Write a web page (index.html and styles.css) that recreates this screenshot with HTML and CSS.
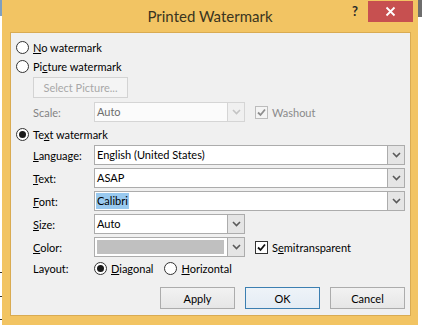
FILE: index.html
```html
<!DOCTYPE html>
<html>
<head>
<meta charset="utf-8">
<link rel="stylesheet" href="styles.css">
</head>
<body>
<div class="desk">
  <div class="edge-blue"></div>
  <div class="edge-gray"></div>
  <div class="tick t1"></div>
  <div class="tick t2"></div>
  <div class="tick t3"></div>
  <div class="window">
    <div class="titlebar">
      <div class="tb-side"></div>
      <div class="title">Printed Watermark</div>
      <div class="tb-side tb-right">
        <div class="help">?</div>
        <div class="close">
          <svg width="11" height="11" viewBox="0 0 11 11"><path d="M1.5 1.5 L9.5 9.5 M9.5 1.5 L1.5 9.5" stroke="#fff" stroke-width="1.8" fill="none"/></svg>
        </div>
      </div>
    </div>
    <div class="client">
      <div class="opt r1"><span class="radio"></span><span><u>N</u>o watermark</span></div>
      <div class="opt r2"><span class="radio"></span><span>Pi<u>c</u>ture watermark</span></div>
      <div class="indent r3"><div class="btn disabled sel-pic">Select Picture...</div></div>
      <div class="indent field r4">
        <span class="label dis">Scale:</span>
        <div class="combo short disabled"><span class="val">Auto</span><span class="arrow"><svg width="9" height="6" viewBox="0 0 9 6"><path d="M1 1 L4.5 4.5 L8 1" stroke="#c4c4c4" stroke-width="1.6" fill="none"/></svg></span></div>
        <span class="check disabled"><span class="box"><svg width="11" height="11" viewBox="0 0 11 11"><path d="M2 5.5 L4.5 8 L9 2.5" stroke="#8e8e8e" stroke-width="1.8" fill="none"/></svg></span><span class="ctext">Washout</span></span>
      </div>
      <div class="opt r5"><span class="radio on"></span><span>Te<u>x</u>t watermark</span></div>
      <div class="indent field r6">
        <span class="label"><u>L</u>anguage:</span>
        <div class="combo long"><span class="val">English (United States)</span><span class="arrow"><svg width="9" height="6" viewBox="0 0 9 6"><path d="M1 1 L4.5 4.5 L8 1" stroke="#5a5a5a" stroke-width="1.6" fill="none"/></svg></span></div>
      </div>
      <div class="indent field r7">
        <span class="label"><u>T</u>ext:</span>
        <div class="combo long"><span class="val">ASAP</span><span class="arrow"><svg width="9" height="6" viewBox="0 0 9 6"><path d="M1 1 L4.5 4.5 L8 1" stroke="#5a5a5a" stroke-width="1.6" fill="none"/></svg></span></div>
      </div>
      <div class="indent field r7">
        <span class="label"><u>F</u>ont:</span>
        <div class="combo long"><span class="val"><span class="selected">Calibri</span></span><span class="arrow"><svg width="9" height="6" viewBox="0 0 9 6"><path d="M1 1 L4.5 4.5 L8 1" stroke="#5a5a5a" stroke-width="1.6" fill="none"/></svg></span></div>
      </div>
      <div class="indent field r7">
        <span class="label"><u>S</u>ize:</span>
        <div class="combo short"><span class="val">Auto</span><span class="arrow"><svg width="9" height="6" viewBox="0 0 9 6"><path d="M1 1 L4.5 4.5 L8 1" stroke="#5a5a5a" stroke-width="1.6" fill="none"/></svg></span></div>
      </div>
      <div class="indent field r7">
        <span class="label"><u>C</u>olor:</span>
        <div class="combo short"><span class="val"><span class="swatch"></span></span><span class="arrow"><svg width="9" height="6" viewBox="0 0 9 6"><path d="M1 1 L4.5 4.5 L8 1" stroke="#5a5a5a" stroke-width="1.6" fill="none"/></svg></span></div>
        <span class="check"><span class="box"><svg width="11" height="11" viewBox="0 0 11 11"><path d="M2 5.5 L4.5 8 L9 2.5" stroke="#111" stroke-width="1.8" fill="none"/></svg></span><span class="ctext">S<u>e</u>mitransparent</span></span>
      </div>
      <div class="indent field r8">
        <span class="label">Layout:</span>
        <span class="lopt"><span class="radio on"></span><span><u>D</u>iagonal</span></span>
        <span class="lopt h"><span class="radio"></span><span><u>H</u>orizontal</span></span>
      </div>
      <div class="buttons">
        <div class="btn">Apply</div>
        <div class="btn default">OK</div>
        <div class="btn">Cancel</div>
      </div>
    </div>
  </div>
</div>
</body>
</html>
```
FILE: styles.css
```css
* { box-sizing: border-box; }
html, body { margin: 0; padding: 0; }
body {
  width: 422px;
  height: 327px;
  background: #ffffff;
  overflow: hidden;
  font-family: Lato, "Noto Sans", sans-serif;
  font-size: 11px;
  color: #000;
}
.desk {
  position: relative;
  width: 422px;
  height: 327px;
  padding-left: 2px;
}
.edge-blue {
  position: absolute;
  left: 0; top: 0;
  width: 2px; height: 16px;
  background: #7f9fc0;
}
.edge-gray {
  position: absolute;
  right: 0; top: 0;
  width: 4px; height: 17px;
  background: #6e6e6e;
}
.tick {
  position: absolute;
  left: 0;
  width: 2px;
  height: 1px;
  background: #333;
}
.t1 { top: 272px; }
.t2 { top: 296px; }
.t3 { top: 319px; }
.window {
  width: 416px;
  height: 325px;
  background: #f2c463;
  display: flex;
  flex-direction: column;
}
.titlebar {
  height: 32px;
  display: grid;
  grid-template-columns: 1fr auto 1fr;
}
.title {
  font-size: 15px;
  color: #3a3420;
  padding-top: 6px;
  line-height: 20px;
}
.tb-right {
  display: flex;
  justify-content: flex-end;
  align-items: flex-start;
  padding-right: 5px;
  padding-top: 1px;
}
.help {
  width: 26px;
  height: 21px;
  text-align: center;
  font-weight: bold;
  font-size: 13px;
  line-height: 21px;
  color: #2a2a2a;
}
.close {
  width: 45px;
  height: 21px;
  background: #c75050;
  display: flex;
  align-items: center;
  justify-content: center;
}
.client {
  margin: 0 7px 9px 8px;
  flex: 1;
  background: #f0f0f0;
  border: 1px solid #d9ab52;
  padding: 0 5px 0 5px;
  display: flex;
  flex-direction: column;
}
.opt {
  display: flex;
  align-items: center;
  height: 19px;
  gap: 4px;
}
.r1 { margin-top: 5px; }
.r2 { margin-top: 0; }
.r3 { margin-top: 1px; }
.r4 { margin-top: 4px; }
.r5 { margin-top: 2px; height: 20px; }
.r6 { margin-top: 1px; }
.r7 { margin-top: 3px; }
.r8 { margin-top: 1px; }
.radio {
  width: 13px;
  height: 13px;
  border: 1px solid #333;
  border-radius: 50%;
  background: #fff;
  display: flex;
  align-items: center;
  justify-content: center;
  flex: none;
}
.radio.on::after {
  content: "";
  width: 7px;
  height: 7px;
  border-radius: 50%;
  background: #1a1a1a;
}
.indent {
  padding-left: 17px;
}
.field {
  display: flex;
  align-items: center;
  height: 20px;
}
.label {
  width: 61px;
  flex: none;
}
.label.dis { color: #838383; }
.btn {
  height: 22px;
  width: 75px;
  border: 1px solid #acacac;
  background: linear-gradient(#f2f2f2, #e6e6e6);
  display: flex;
  align-items: center;
  justify-content: center;
}
.btn.disabled {
  border-color: #d3d3d3;
  background: #f4f4f4;
  color: #a8a8a8;
}
.sel-pic {
  width: 95px;
  height: 21px;
}
.btn.default {
  border-color: #3c7fb1;
  background: linear-gradient(#eef3f8, #e4ecf4);
}
.combo {
  height: 20px;
  border: 1px solid #acacac;
  background: #fff;
  display: flex;
  flex: none;
}
.combo.long { width: 311px; }
.combo.short { width: 151px; }
.combo.disabled {
  border-color: #d5d5d5;
  background: #fbfbfb;
  color: #6d6d6d;
}
.val {
  flex: 1;
  display: flex;
  align-items: center;
  padding: 1px 1px 1px 2px;
  line-height: 16px;
}
.val > * { flex: none; }
.arrow {
  width: 17px;
  flex: none;
  background: #e5e5e5;
  border-left: 1px solid #acacac;
  display: flex;
  align-items: center;
  justify-content: center;
}
.combo.disabled .arrow {
  background: #f0f0f0;
  border-left-color: #d5d5d5;
}
.selected {
  background: #99c9ef;
  padding: 0 1px;
  margin-left: -1px;
  line-height: 16px;
}
.swatch {
  width: 127px;
  height: 14px;
  background: #c0c0c0;
}
.check {
  display: flex;
  align-items: center;
  margin-left: 10px;
  gap: 4px;
}
.box {
  width: 13px;
  height: 13px;
  border: 1px solid #333;
  background: #fff;
  display: flex;
  align-items: center;
  justify-content: center;
}
.check.disabled .box {
  border-color: #bcbcbc;
  background: #f4f4f4;
}
.check.disabled .ctext { color: #8a8a8a; }
.lopt {
  display: flex;
  align-items: center;
  gap: 4px;
}
.lopt.h { margin-left: 11px; }
.buttons {
  margin-top: 9px;
  display: flex;
  justify-content: flex-end;
  gap: 10px;
}
u { text-decoration: underline; text-underline-offset: 1px; }
```
